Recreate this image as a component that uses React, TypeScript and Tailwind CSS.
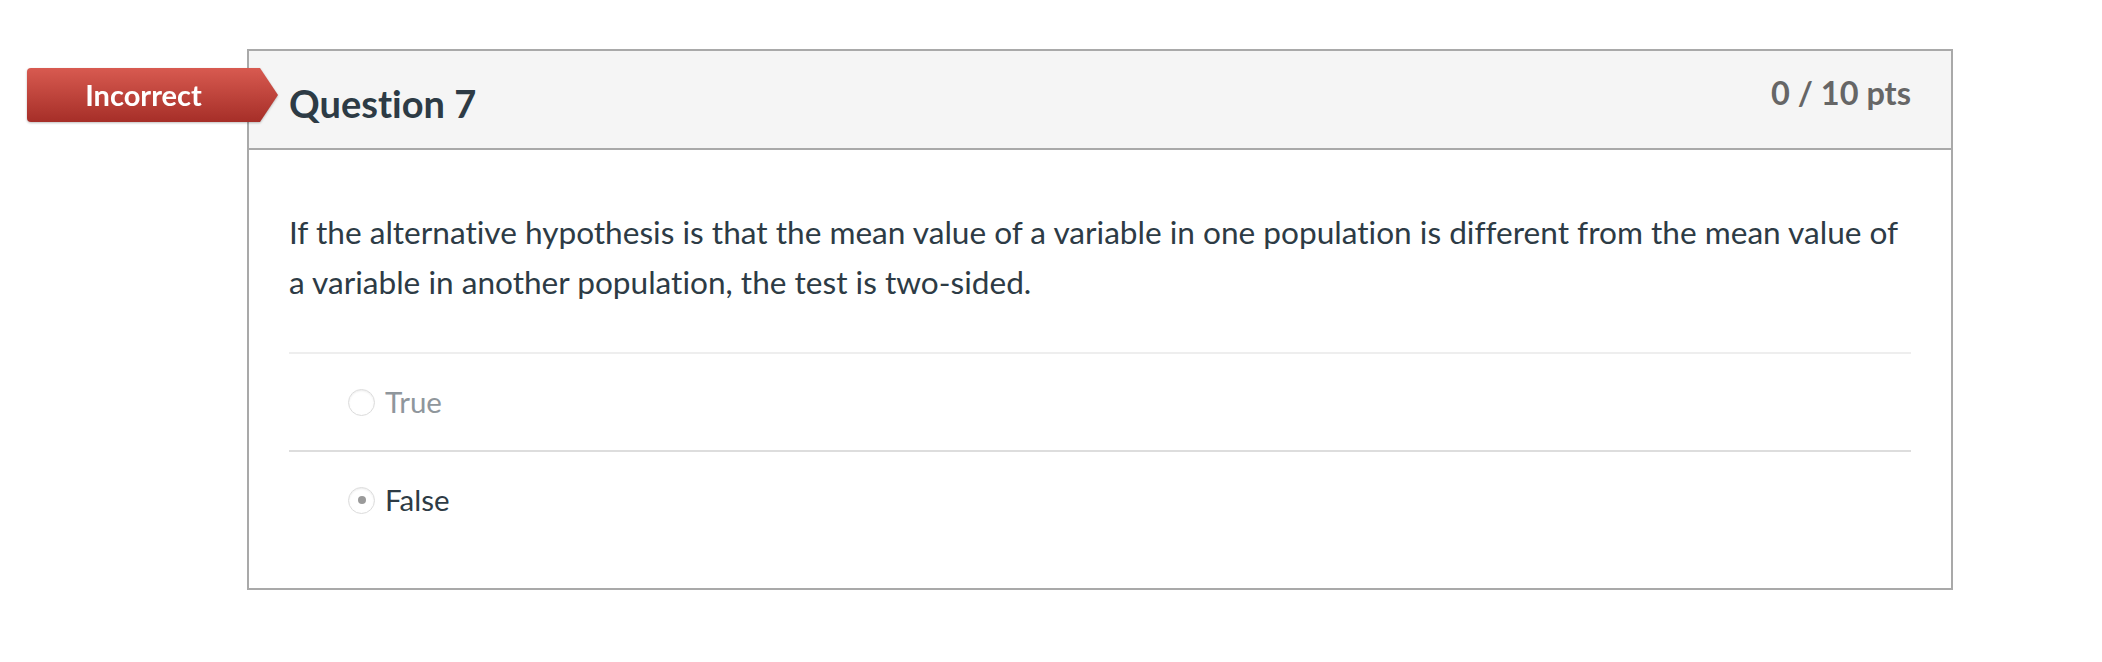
import React from "react";

const answers = [
  { label: "True", selected: false },
  { label: "False", selected: true },
];

function Radio({ checked }: { checked: boolean }) {
  return (
    <span className="flex h-[27px] w-[27px] shrink-0 items-center justify-center rounded-full border border-[#dcdcdc] bg-white shadow-[inset_0_1px_2px_rgba(0,0,0,0.08)]">
      {checked && <span className="h-[8px] w-[8px] rounded-full bg-[#9a9a9a]" />}
    </span>
  );
}

export default function App() {
  return (
    <div
      className="min-h-screen bg-white pl-[247px] pr-[149px] pt-[49px] [font-variant-ligatures:none]"
      style={{ fontFamily: "Lato, 'Open Sans', sans-serif" }}
    >
      <div className="relative border-2 border-[#a9a9a9] bg-white">
        {/* Result flag */}
        <div className="absolute left-[-222px] top-[17px] flex h-[54px] drop-shadow-[0_1px_1px_rgba(0,0,0,0.25)]">
          <div className="flex w-[231px] items-center justify-center rounded-l-[4px] bg-gradient-to-b from-[#d85a50] to-[#a62e28] pl-[2px] text-[29px] font-bold text-white">
            Incorrect
          </div>
          <svg width="20" height="54" viewBox="0 0 20 54" className="block">
            <defs>
              <linearGradient id="flag" x1="0" y1="0" x2="0" y2="1">
                <stop offset="0" stopColor="#d85a50" />
                <stop offset="1" stopColor="#a62e28" />
              </linearGradient>
            </defs>
            <path d="M0 0 L2 0 L20 27 L2 54 L0 54 Z" fill="url(#flag)" />
          </svg>
        </div>

        {/* Header */}
        <div className="flex h-[99px] items-start justify-between border-b-2 border-[#a9a9a9] bg-[#f5f5f5] px-[40px] pt-[26px]">
          <h2 className="mt-[7px] text-[38px] font-bold leading-none text-[#2d3b45]">Question 7</h2>
          <div className="text-[32.5px] font-bold leading-none text-[#666666]">0 / 10 pts</div>
        </div>

        {/* Body */}
        <div className="px-[40px] pb-[40px] pt-[57px]">
          <p className="text-[31.6px] leading-[50px] text-[#2d3b45]">
            If the alternative hypothesis is that the mean value of a variable in one population is different from the mean value of a variable in another population, the test is two-sided.
          </p>

          <div className="mt-[45px]">
            {answers.map((a, i) => (
              <div
                key={a.label}
                className={`flex h-[98px] items-center gap-[10px] border-t-2 pl-[59px] ${
                  i === 0 ? "border-[#eeeeee]" : "border-[#dddddd]"
                }`}
              >
                <Radio checked={a.selected} />
                <span
                  className={`text-[29.5px] leading-none ${
                    a.selected ? "text-[#2d3b45]" : "text-[#8f969c]"
                  }`}
                >
                  {a.label}
                </span>
              </div>
            ))}
          </div>
        </div>
      </div>
    </div>
  );
}
